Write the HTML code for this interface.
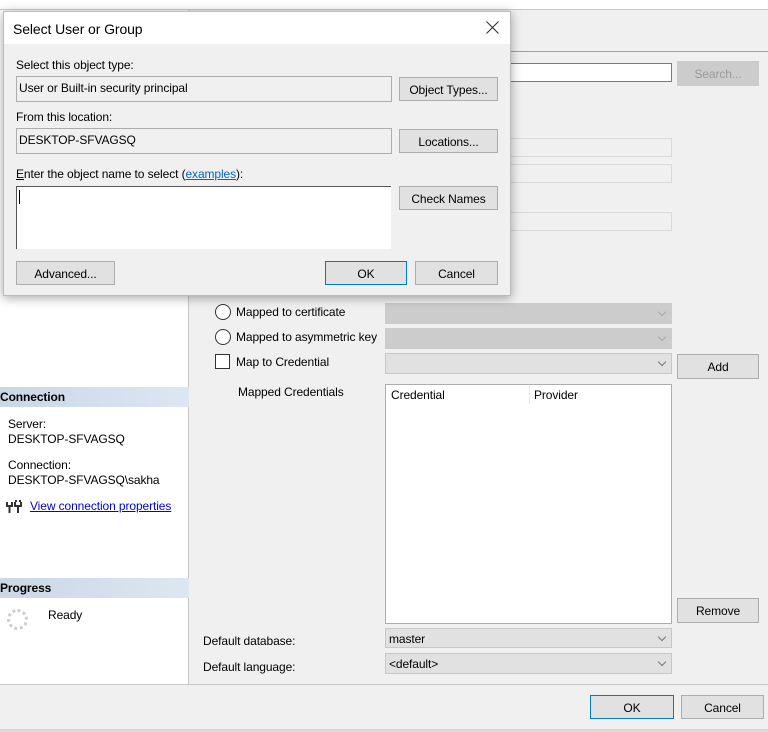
<!DOCTYPE html>
<html><head><style>
*{box-sizing:border-box;margin:0;padding:0}
body{width:768px;height:732px;position:relative;overflow:hidden;background:#f0f0f0;font-family:"Liberation Sans",Arial,sans-serif;font-size:12px;color:#000;letter-spacing:-0.1px}
.a{position:absolute}
.btn{position:absolute;background:#e1e1e1;border:1px solid #adadad;text-align:center;font-size:12px}
.tb{position:absolute;background:#fff;border:1px solid #7a7a7a}
.dis{position:absolute;background:#f0f0f0;border:1px solid #dadada}
.cb{position:absolute;background:#cccccc;border:1px solid #cccccc}
.cmb{position:absolute;background:#e1e1e1;border:1px solid #c8c8c8;padding:3px 0 0 3px;font-size:12px}
.chev{position:absolute;right:6px;top:5px;width:6px;height:6px;border-right:1px solid #777;border-bottom:1px solid #777;transform:rotate(45deg)}
.hdr{position:absolute;left:0;width:189px;height:20px;background:linear-gradient(to right,#c9d7e6,#dde7f2);font-weight:bold;font-size:12px;padding:3px 0 0 0}
</style></head><body>
<div class="a" style="left:0;top:0;width:768px;height:10px;background:#fff;border-bottom:1px solid #c8c8c8"></div>
<div class="a" style="left:0;top:10px;width:189px;height:674px;background:#fff;border-right:1px solid #c8c8c8"></div>
<div class="a" style="left:190px;top:51px;width:578px;height:1px;background:#a0a0a0"></div>
<div class="tb" style="left:510px;top:63px;width:162px;height:19px"></div>
<div class="btn" style="left:677px;top:61px;width:82px;height:25px;color:#999;background:#ccc;border-color:#ccc;padding-top:5px">Search...</div>
<div class="dis" style="left:510px;top:138px;width:162px;height:19px"></div>
<div class="dis" style="left:510px;top:164px;width:162px;height:19px"></div>
<div class="dis" style="left:510px;top:212px;width:162px;height:19px"></div>

<div class="cb" style="left:385px;top:303px;width:287px;height:21px"><div class="chev" style="border-color:#aaa"></div></div>
<div class="cb" style="left:385px;top:328px;width:287px;height:21px"><div class="chev" style="border-color:#aaa"></div></div>
<div class="cmb" style="left:385px;top:353px;width:287px;height:21px"><div class="chev"></div></div>
<div class="btn" style="left:677px;top:354px;width:82px;height:25px;padding-top:5px">Add</div>
<div class="a" style="left:215px;top:304px;width:16px;height:16px;border:1px solid #333;border-radius:50%;background:#fff"></div>
<div class="a" style="left:236px;top:305px">Mapped to certificate</div>
<div class="a" style="left:215px;top:329px;width:16px;height:16px;border:1px solid #333;border-radius:50%;background:#fff"></div>
<div class="a" style="left:236px;top:330px">Mapped to asymmetric key</div>
<div class="a" style="left:215px;top:354px;width:15px;height:15px;border:1px solid #333;background:#fff"></div>
<div class="a" style="left:236px;top:355px">Map to Credential</div>
<div class="a" style="left:238px;top:385px">Mapped Credentials</div>
<div class="a" style="left:385px;top:384px;width:287px;height:240px;background:#fff;border:1px solid #adadad">
 <div class="a" style="left:5px;top:3px">Credential</div>
 <div class="a" style="left:143px;top:1px;width:1px;height:18px;background:#e5e5e5"></div>
 <div class="a" style="left:148px;top:3px">Provider</div>
</div>
<div class="btn" style="left:677px;top:598px;width:82px;height:25px;padding-top:5px">Remove</div>
<div class="a" style="left:203px;top:634px">Default database:</div>
<div class="cmb" style="left:385px;top:628px;width:287px;height:20px">master<div class="chev"></div></div>
<div class="a" style="left:203px;top:660px">Default language:</div>
<div class="cmb" style="left:385px;top:653px;width:287px;height:21px">&lt;default&gt;<div class="chev"></div></div>

<div class="hdr" style="top:387px">Connection</div>
<div class="a" style="left:8px;top:417px;line-height:15px">Server:<br>DESKTOP-SFVAGSQ</div>
<div class="a" style="left:8px;top:458px;line-height:15px">Connection:<br>DESKTOP-SFVAGSQ\sakha</div>
<svg class="a" style="left:6px;top:499px" width="16" height="16" viewBox="0 0 16 16"><path d="M1 3v4h5V3M3.5 7v7M9 3v4h6V3M10 1v2M14 1v2M12 7v7" stroke="#333" stroke-width="2" fill="none"/></svg>
<div class="a" style="left:30px;top:499px;color:#0000ee;text-decoration:underline">View connection properties</div>
<div class="hdr" style="top:578px">Progress</div>
<div class="a" style="left:7px;top:609px;width:21px;height:21px;border:3px dotted #ccc;border-radius:50%"></div>
<div class="a" style="left:48px;top:608px">Ready</div>

<div class="a" style="left:0;top:684px;width:768px;height:1px;background:#c8c8c8"></div>
<div class="btn" style="left:590px;top:695px;width:84px;height:24px;border-color:#0078d7;padding-top:5px">OK</div>
<div class="btn" style="left:681px;top:695px;width:83px;height:24px;padding-top:5px">Cancel</div>
<div class="a" style="left:0;top:729px;width:768px;height:3px;background:#d8d8d8"></div>

<!-- dialog -->
<div class="a" style="left:3px;top:11px;width:508px;height:285px;background:#f0f0f0;box-shadow:0 2px 10px rgba(0,0,0,.35);border:1px solid #bbb">
 <div class="a" style="left:0;top:0;width:506px;height:32px;background:#fff"></div>
 <div class="a" style="left:9px;top:9px;font-size:14px">Select User or Group</div>
 <svg class="a" style="left:482px;top:9px" width="13" height="13" viewBox="0 0 13 13"><path d="M0.5 0.5L12.5 12.5M12.5 0.5L0.5 12.5" stroke="#333" stroke-width="1.1"/></svg>
 <div class="a" style="left:12px;top:46px">Select this object type:</div>
 <div class="a" style="left:12px;top:64px;width:376px;height:26px;background:#f0f0f0;border:1px solid #adadad;padding:4px 0 0 2px">User or Built-in security principal</div>
 <div class="btn" style="left:395px;top:65px;width:99px;height:24px;padding-top:5px">Object Types...</div>
 <div class="a" style="left:12px;top:98px">From this location:</div>
 <div class="a" style="left:12px;top:116px;width:376px;height:26px;background:#f0f0f0;border:1px solid #adadad;padding:4px 0 0 2px">DESKTOP-SFVAGSQ</div>
 <div class="btn" style="left:395px;top:117px;width:99px;height:24px;padding-top:5px">Locations...</div>
 <div class="a" style="left:12px;top:155px"><u>E</u>nter the object name to select (<span style="color:#0066cc;text-decoration:underline">examples</span>):</div>
 <div class="a" style="left:12px;top:174px;width:375px;height:63px;background:#fff;border-top:1px solid #555;border-left:1px solid #555"><div class="a" style="left:2px;top:3px;width:1px;height:14px;background:#000"></div></div>
 <div class="btn" style="left:395px;top:174px;width:99px;height:24px;padding-top:5px">Check Names</div>
 <div class="btn" style="left:12px;top:249px;width:99px;height:24px;padding-top:5px">Advanced...</div>
 <div class="btn" style="left:321px;top:249px;width:82px;height:24px;border-color:#0078d7;padding-top:5px">OK</div>
 <div class="btn" style="left:411px;top:249px;width:83px;height:24px;padding-top:5px">Cancel</div>
</div>
</body></html>
